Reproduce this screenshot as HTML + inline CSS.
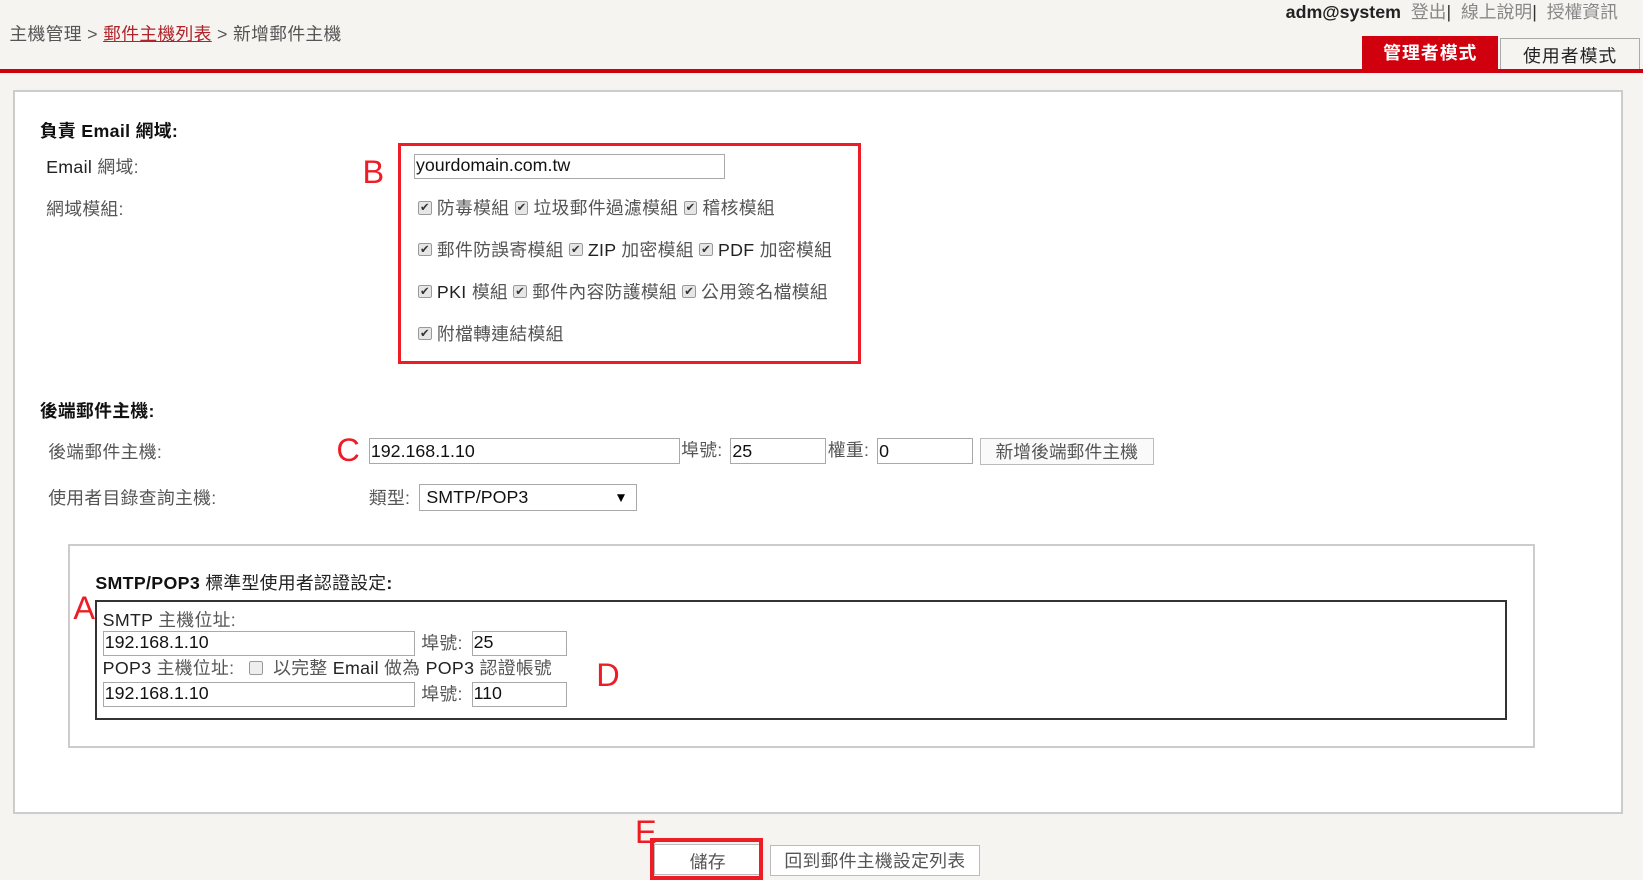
<!DOCTYPE html>
<html><head><meta charset="utf-8">
<style>
html,body{margin:0;padding:0;}
body{width:1568px;height:827px;zoom:1.04783;background:#f5f4f1;position:relative;overflow:hidden;
font-family:"Liberation Sans","Noto Sans CJK TC",sans-serif;font-size:17px;letter-spacing:0.3px;color:#555;}
.a{position:absolute;white-space:nowrap;line-height:20px;}
.b{font-weight:bold;color:#111;}
.d{color:#222;}
.inp{position:absolute;background:#fff;border:1px solid #a9a9a9;box-sizing:border-box;color:#111;font-size:17px;letter-spacing:0;line-height:20px;padding-left:1px;white-space:nowrap;}
.btn{position:absolute;background:#fafafa;border:1px solid #bbb;box-sizing:border-box;color:#555;text-align:center;font-size:17px;line-height:22px;}
.red{color:#ee1c25;font-size:31px;line-height:34px;position:absolute;font-family:"Liberation Sans",sans-serif;font-weight:normal;letter-spacing:0;}
.cb{display:inline-block;width:13px;height:13px;border:1px solid #999;border-radius:2px;background:#e6e6e6;vertical-align:middle;margin-top:-3px;font-size:11px;line-height:13px;text-align:center;color:#333;margin-right:5px;box-sizing:border-box;letter-spacing:0;}
.cb.e{background:#eee;}
</style></head><body>

<div class="a" style="left:9px;top:23px;">主機管理 &gt; <span style="color:#b0232a;text-decoration:underline;">郵件主機列表</span> &gt; 新增郵件主機</div>

<div class="a" style="left:1227px;top:2px;font-size:17px;letter-spacing:0;"><span style="color:#222;font-weight:bold;">adm@system</span>&nbsp; <span style="color:#888;">登出</span><span style="color:#333;">|</span>&nbsp; <span style="color:#888;">線上說明</span><span style="color:#333;">|</span>&nbsp; <span style="color:#888;">授權資訊</span></div>

<div style="position:absolute;left:1300px;top:34px;width:130px;height:34px;background:#d0000f;color:#fff;font-weight:bold;font-size:17px;text-align:center;line-height:34px;letter-spacing:1px;">管理者模式</div>
<div style="position:absolute;left:1432px;top:36px;width:133px;height:32px;background:#f5f4f1;border:1px solid #aaa;border-bottom:none;box-sizing:border-box;color:#222;font-size:17px;text-align:center;line-height:34px;letter-spacing:1px;">使用者模式</div>
<div style="position:absolute;left:0;top:66px;width:1568px;height:4px;background:#d0000f;"></div>

<div style="position:absolute;left:12px;top:86px;width:1537px;height:691px;background:#fff;border:2px solid #ccc;box-sizing:border-box;"></div>

<div class="a b" style="left:38px;top:115px;">負責 Email 網域:</div>
<div class="a" style="left:44px;top:150px;"><span class="d">Email</span> 網域:</div>
<div class="a" style="left:44px;top:190px;">網域模組:</div>
<div class="red" style="left:346px;top:148px;">B</div>
<div style="position:absolute;left:380px;top:136px;width:442px;height:211px;border:3px solid #ee1c25;box-sizing:border-box;"></div>
<div class="inp" style="left:395px;top:147px;width:297px;height:24px;">yourdomain.com.tw</div>

<div class="a" style="left:399px;top:189px;"><span class="cb">✔</span>防毒模組 <span class="cb">✔</span>垃圾郵件過濾模組 <span class="cb">✔</span>稽核模組</div>
<div class="a" style="left:399px;top:229px;"><span class="cb">✔</span>郵件防誤寄模組 <span class="cb">✔</span><span class="d">ZIP</span> 加密模組 <span class="cb">✔</span><span class="d">PDF</span> 加密模組</div>
<div class="a" style="left:399px;top:269px;"><span class="cb">✔</span><span class="d">PKI</span> 模組 <span class="cb">✔</span>郵件內容防護模組 <span class="cb">✔</span>公用簽名檔模組</div>
<div class="a" style="left:399px;top:309px;"><span class="cb">✔</span>附檔轉連結模組</div>

<div class="a b" style="left:38px;top:383px;">後端郵件主機:</div>
<div class="a" style="left:46px;top:422px;">後端郵件主機:</div>
<div class="red" style="left:321px;top:413px;">C</div>
<div class="inp" style="left:352px;top:418px;width:297px;height:25px;line-height:23px;">192.168.1.10</div>
<div class="a" style="left:650px;top:420px;">埠號:</div>
<div class="inp" style="left:697px;top:418px;width:91px;height:25px;line-height:23px;">25</div>
<div class="a" style="left:790px;top:420px;">權重:</div>
<div class="inp" style="left:837px;top:418px;width:92px;height:25px;line-height:23px;">0</div>
<div class="btn" style="left:935px;top:418px;width:166px;height:26px;line-height:26px;letter-spacing:0;">新增後端郵件主機</div>

<div class="a" style="left:46px;top:466px;">使用者目錄查詢主機:</div>
<div class="a" style="left:352px;top:466px;">類型:</div>
<div class="inp" style="left:400px;top:462px;width:208px;height:26px;line-height:24px;padding-left:6px;">SMTP/POP3<span style="position:absolute;right:8px;top:0;font-size:13px;color:#000;">▼</span></div>

<div style="position:absolute;left:65px;top:519px;width:1400px;height:195px;border:2px solid #ccc;box-sizing:border-box;"></div>
<div class="a b" style="left:91px;top:547px;">SMTP/POP3 <span style="font-weight:normal;color:#222;">標準型使用者認證設定</span>:</div>
<div style="position:absolute;left:91px;top:573px;width:1347px;height:114px;border:2px solid #333;box-sizing:border-box;"></div>
<div class="red" style="left:70px;top:564px;">A</div>
<div class="a" style="left:98px;top:582px;"><span class="d">SMTP</span> 主機位址:</div>
<div class="inp" style="left:98px;top:602px;width:298px;height:24px;">192.168.1.10</div>
<div class="a" style="left:402px;top:604px;">埠號:</div>
<div class="inp" style="left:450px;top:602px;width:91px;height:24px;">25</div>
<div class="a" style="left:98px;top:628px;"><span class="d">POP3</span> 主機位址: &nbsp;<span class="cb e" style="margin:-3px 10px 0 4px;"></span>以完整 <span class="d">Email</span> 做為 <span class="d">POP3</span> 認證帳號</div>
<div class="red" style="left:569px;top:628px;">D</div>
<div class="inp" style="left:98px;top:651px;width:298px;height:24px;">192.168.1.10</div>
<div class="a" style="left:402px;top:653px;">埠號:</div>
<div class="inp" style="left:450px;top:651px;width:91px;height:24px;">110</div>

<div class="red" style="left:606px;top:778px;">E</div>
<div class="btn" style="left:624px;top:805px;width:103px;height:30px;background:#fff;line-height:28px;padding-top:3px;">儲存</div>
<div style="position:absolute;left:620px;top:800px;width:108px;height:40px;border:4px solid #ee1c25;box-sizing:border-box;"></div>
<div class="btn" style="left:735px;top:806px;width:200px;height:30px;background:#fff;line-height:28px;padding-top:1px;">回到郵件主機設定列表</div>

</body></html>
